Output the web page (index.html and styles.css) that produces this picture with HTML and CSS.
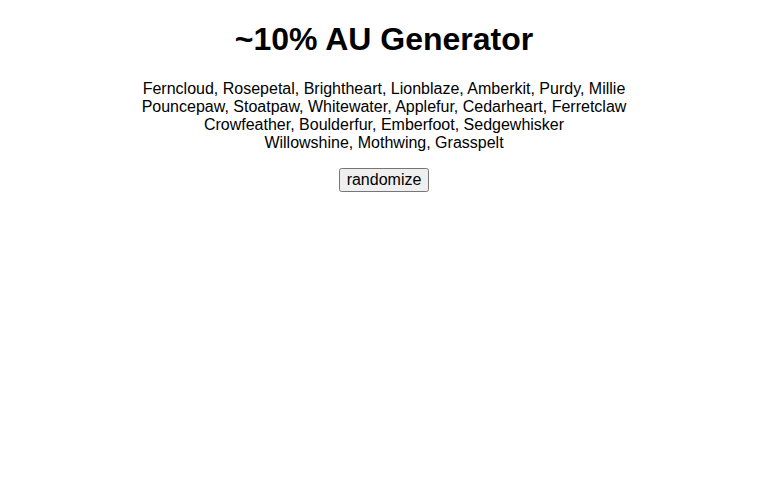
FILE: index.html
```html
<!DOCTYPE html>
<html lang="en">
<head>
    <meta charset="UTF-8">
    <meta name="viewport" content="width=device-width, initial-scale=1.0">
    <title>~10% AU Generator</title>
    <link rel="stylesheet" href="styles.css">
</head>
<body>
    <h1>~10% AU Generator</h1>
    <p class="names">
        Ferncloud, Rosepetal, Brightheart, Lionblaze, Amberkit, Purdy, Millie<br>
        Pouncepaw, Stoatpaw, Whitewater, Applefur, Cedarheart, Ferretclaw<br>
        Crowfeather, Boulderfur, Emberfoot, Sedgewhisker<br>
        Willowshine, Mothwing, Grasspelt
    </p>
    <button class="randomize">randomize</button>
</body>
</html>
```

FILE: styles.css
```css
body {
    font-family: "Liberation Sans", Arial, sans-serif;
    text-align: center;
    color: #000000;
    background: #ffffff;
    margin: 0 8px;
}
h1 {
    font-size: 2em;
}
.names {
    font-size: 16px;
}
.randomize {
    font-family: "Liberation Sans", Arial, sans-serif;
    font-size: 16px;
}
```
